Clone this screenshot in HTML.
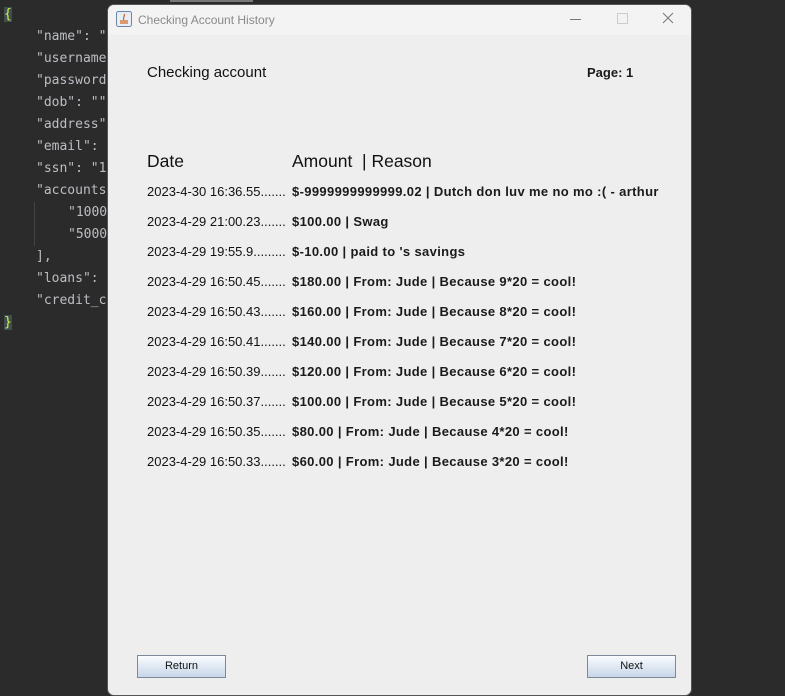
<!DOCTYPE html><html><head><style>
body{margin:0;width:785px;height:696px;background:#2b2b2b;overflow:hidden;position:relative;font-family:"Liberation Sans",sans-serif}
.code{position:absolute;left:0;top:2px;font-family:"DejaVu Sans Mono","Liberation Mono",monospace;font-size:13px;color:#bcbec4;}
.code div{position:absolute;white-space:pre;line-height:22px}
.br{color:#e8e84a;background:#3b514d}
.win{position:absolute;left:107px;top:4px;width:583px;height:690px;background:#eeeeee;border-radius:7px;overflow:hidden;border:1px solid #555}
.tb{height:30px;background:#f3f3f3;position:relative;font-size:12px;color:#8a8a8a}
.t{position:absolute;font-size:13px;color:#111;white-space:pre}
.a{font-weight:bold;color:#1a1a1a;letter-spacing:0.35px}
.btn{position:absolute;top:650px;width:87px;height:21px;border:1px solid #7a8a99;background:linear-gradient(#fafcff,#dbe5f1 60%,#c8d6e8);font-size:11px;text-align:center;line-height:21px;color:#111}
</style></head><body>
<div style="position:absolute;left:170px;top:0;width:83px;height:2px;background:#777"></div>
<div class="code">
<div style="left:4px;top:2px"><span class="br">{</span></div>
<div style="left:36px;top:24px">"name": "</div>
<div style="left:36px;top:46px">"username</div>
<div style="left:36px;top:68px">"password</div>
<div style="left:36px;top:90px">"dob": ""</div>
<div style="left:36px;top:112px">"address"</div>
<div style="left:36px;top:134px">"email":</div>
<div style="left:36px;top:156px">"ssn": "1</div>
<div style="left:36px;top:178px">"accounts</div>
<div style="left:68px;top:200px">"1000</div>
<div style="left:68px;top:222px">"5000</div>
<div style="left:36px;top:244px">],</div>
<div style="left:36px;top:266px">"loans":</div>
<div style="left:36px;top:288px">"credit_c</div>
<div style="left:4px;top:310px"><span class="br">}</span></div>
<div style="left:34px;top:200px;width:1px;height:44px;background:#444"></div>
</div>
<div class="win">
<div class="tb">
<svg style="position:absolute;left:8px;top:6px" width="16" height="16"><rect x="0.5" y="0.5" width="15" height="15" rx="2" fill="#e8eef5" stroke="#6a86a8"/><path d="M8 3c2 2-2 3 0 6M4 10h8M4 12h8" stroke="#d2691e" stroke-width="1.2" fill="none"/></svg>
<span style="position:absolute;left:30px;top:8px">Checking Account History</span>
<div style="position:absolute;left:462px;top:14px;width:11px;height:1px;background:#777"></div>
<div style="position:absolute;left:509px;top:8px;width:9px;height:9px;border:1px solid #ccc"></div>
<svg style="position:absolute;left:554px;top:7px" width="12" height="12"><path d="M1 1L11 11M11 1L1 11" stroke="#777" stroke-width="1"/></svg>
</div>
<div class="t" style="left:39px;top:59px;font-size:15px">Checking account</div>
<div class="t a" style="left:479px;top:60px;font-size:13px;letter-spacing:0">Page: 1</div>
<div class="t" style="left:39px;top:146px;font-size:17.5px">Date</div>
<div class="t" style="left:184px;top:146px;font-size:17.5px">Amount  | Reason</div>
<div class="t" style="left:39px;top:179px">2023-4-30 16:36.55.......</div><div class="t a" style="left:184px;top:179px">$-9999999999999.02 | Dutch don luv me no mo :( - arthur</div>
<div class="t" style="left:39px;top:209px">2023-4-29 21:00.23.......</div><div class="t a" style="left:184px;top:209px">$100.00 | Swag</div>
<div class="t" style="left:39px;top:239px">2023-4-29 19:55.9.........</div><div class="t a" style="left:184px;top:239px">$-10.00 | paid to 's savings</div>
<div class="t" style="left:39px;top:269px">2023-4-29 16:50.45.......</div><div class="t a" style="left:184px;top:269px">$180.00 | From: Jude | Because 9*20 = cool!</div>
<div class="t" style="left:39px;top:299px">2023-4-29 16:50.43.......</div><div class="t a" style="left:184px;top:299px">$160.00 | From: Jude | Because 8*20 = cool!</div>
<div class="t" style="left:39px;top:329px">2023-4-29 16:50.41.......</div><div class="t a" style="left:184px;top:329px">$140.00 | From: Jude | Because 7*20 = cool!</div>
<div class="t" style="left:39px;top:359px">2023-4-29 16:50.39.......</div><div class="t a" style="left:184px;top:359px">$120.00 | From: Jude | Because 6*20 = cool!</div>
<div class="t" style="left:39px;top:389px">2023-4-29 16:50.37.......</div><div class="t a" style="left:184px;top:389px">$100.00 | From: Jude | Because 5*20 = cool!</div>
<div class="t" style="left:39px;top:419px">2023-4-29 16:50.35.......</div><div class="t a" style="left:184px;top:419px">$80.00 | From: Jude | Because 4*20 = cool!</div>
<div class="t" style="left:39px;top:449px">2023-4-29 16:50.33.......</div><div class="t a" style="left:184px;top:449px">$60.00 | From: Jude | Because 3*20 = cool!</div>
<div class="btn" style="left:29px">Return</div>
<div class="btn" style="left:479px">Next</div>
</div>
</body></html>
